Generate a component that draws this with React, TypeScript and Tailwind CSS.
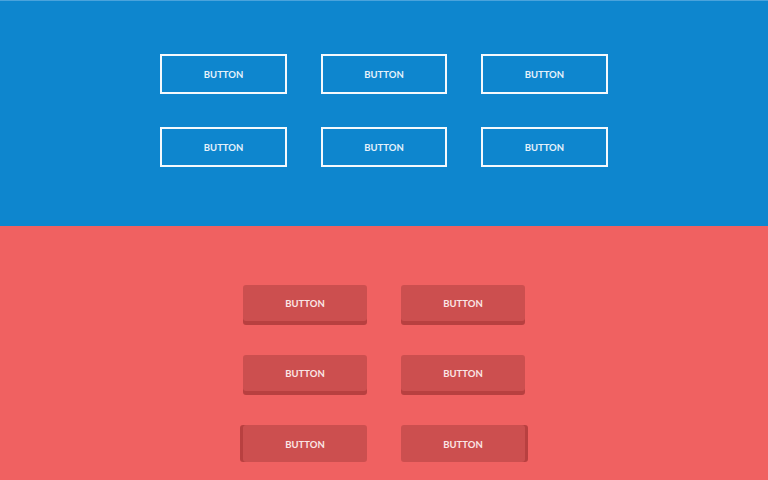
export default function App() {
  const labels = [0, 1, 2, 3, 4, 5];
  const font = { fontFamily: "Lato, 'Open Sans', sans-serif" };
  const flat =
    "rounded-[3px] bg-[#cc4f4f] pt-[2px] text-[9.5px] font-bold text-[#fbe6e6] leading-none";
  return (
    <div className="w-[768px] h-[480px] flex flex-col overflow-hidden" style={font}>
      {/* outline buttons */}
      <section className="h-[226px] bg-[#0e86ce] border-t border-[#4aa3dc] pt-[53px] flex justify-center">
        <div className="grid grid-cols-[126.4px_126.4px_126.4px] gap-x-[34px] gap-y-[33px] content-start">
          {labels.map((i) => (
            <button
              key={i}
              className="h-[40px] border-2 border-[#f4f9fd] pt-[2px] text-[9.5px] font-bold text-[#e6f2fb] leading-none"
            >
              BUTTON
            </button>
          ))}
        </div>
      </section>

      {/* flat 3d buttons */}
      <section className="flex-1 bg-[#f06161] pt-[59px] flex justify-center">
        <div className="grid grid-cols-[124px_124px] gap-x-[34px] gap-y-[34px] content-start">
          <button className={`h-[36px] shadow-[0_4px_0_#b84040] ${flat}`}>BUTTON</button>
          <button className={`h-[36px] shadow-[0_4px_0_#b84040] ${flat}`}>BUTTON</button>
          <button className={`h-[36px] shadow-[0_4px_0_#b84040] ${flat}`}>BUTTON</button>
          <button className={`h-[36px] shadow-[0_4px_0_#b84040] ${flat}`}>BUTTON</button>
          <button className={`h-[37px] shadow-[-3px_0_0_#b84040] ${flat}`}>BUTTON</button>
          <button className={`h-[37px] shadow-[3px_0_0_#b84040] ${flat}`}>BUTTON</button>
        </div>
      </section>
    </div>
  );
}
